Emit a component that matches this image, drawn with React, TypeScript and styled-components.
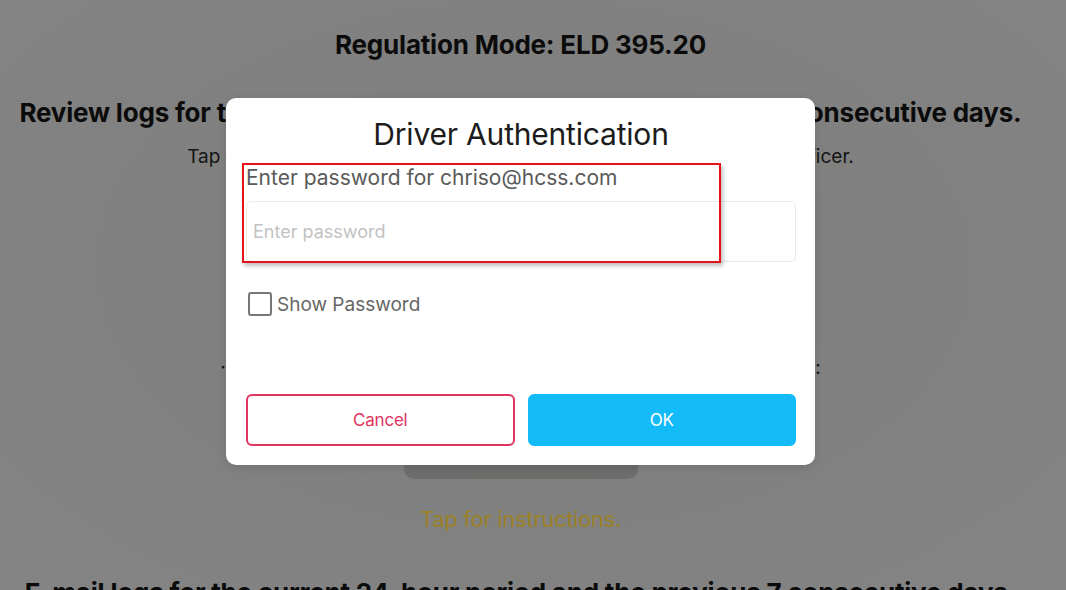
import React, { useState } from 'react';
import styled, { createGlobalStyle } from 'styled-components';

const GlobalStyle = createGlobalStyle`
	html, body {
		margin: 0;
		padding: 0;
		width: 100%;
		height: 100%;
		overflow: hidden;
		background: #808080;
		font-family: Inter, 'Noto Sans', sans-serif;
	}
`;

const Page = styled.div`
	position: relative;
	width: 1041px;
	height: 590px;
	display: flex;
	flex-direction: column;
	align-items: center;
	background: radial-gradient(ellipse at 50% 45%, #7c7d7a 0%, #818181 60%, #848484 100%);
	padding-right: 25px;
	overflow: hidden;
`;

const Heading = styled.div<{ top: number }>`
	margin-top: ${(props) => props.top}px;
	font-size: 26px;
	line-height: 30px;
	font-weight: 700;
	color: #0b0b0b;
	white-space: nowrap;
	letter-spacing: -0.2px;
`;

const Hint = styled.div<{ top: number }>`
	margin-top: ${(props) => props.top}px;
	font-size: 19px;
	line-height: 24px;
	color: #141414;
	white-space: nowrap;
`;

const DimButton = styled.div`
	margin-top: 49px;
	width: 234px;
	height: 50px;
	flex-shrink: 0;
	border-radius: 10px;
	background: #6d6e6b;
`;

const InstructionLink = styled.div`
	margin-top: 27px;
	font-size: 22px;
	line-height: 26px;
	color: #9a8026;
	letter-spacing: -0.3px;
`;

const Overlay = styled.div`
	position: absolute;
	inset: 0;
	display: flex;
	justify-content: center;
	align-items: flex-start;
	padding: 98px 25px 0 0;
`;

const Modal = styled.div`
	position: relative;
	width: 589px;
	box-sizing: border-box;
	padding: 17px 19px 19px 20px;
	background: #fff;
	border-radius: 10px;
	box-shadow: 0 2px 8px rgba(0, 0, 0, 0.12);
	display: flex;
	flex-direction: column;
`;

const Title = styled.div`
	text-align: center;
	font-size: 30px;
	line-height: 38px;
	color: #1c1c1c;
	letter-spacing: -0.2px;
`;

const Label = styled.div`
	margin-top: 13px;
	font-size: 21px;
	line-height: 24px;
	color: #5a5a5a;
`;

const Input = styled.input`
	margin-top: 11px;
	height: 61px;
	flex-shrink: 0;
	box-sizing: border-box;
	border: 1px solid #e9e9e9;
	border-radius: 5px;
	padding: 0 6px;
	font-family: inherit;
	font-size: 18px;
	color: #333;
	outline: none;
	&::placeholder {
		color: #c2c2c2;
	}
`;

const CheckRow = styled.label`
	margin-top: 30px;
	height: 24px;
	display: flex;
	align-items: center;
	gap: 5px;
	padding-left: 2px;
	font-size: 19px;
	color: #666;
	cursor: pointer;
`;

const Box = styled.span`
	width: 20px;
	height: 20px;
	border: 2px solid #777;
	border-radius: 3px;
	display: inline-flex;
	align-items: center;
	justify-content: center;
`;

const Actions = styled.div`
	margin-top: 78px;
	display: grid;
	grid-template-columns: 1fr 1fr;
	gap: 13px;
`;

const ActionButton = styled.button<{ primary?: boolean }>`
	height: 52px;
	border-radius: 6px;
	font-family: inherit;
	font-size: 17px;
	letter-spacing: -0.2px;
	cursor: pointer;
	border: 2px solid ${(props) => (props.primary ? '#13bbf8' : '#e0335d')};
	background: ${(props) => (props.primary ? '#13bbf8' : '#fff')};
	color: ${(props) => (props.primary ? '#fff' : '#e0335d')};
`;

const Highlight = styled.div`
	position: absolute;
	left: 16px;
	top: 65px;
	width: 479px;
	height: 100px;
	box-sizing: border-box;
	border: 2px solid #e5121a;
	box-shadow: 2px 3px 4px rgba(0, 0, 0, 0.25);
	pointer-events: none;
`;

function App() {
	const [show, setShow] = useState(false);

	return (
		<>
			<GlobalStyle />
			<Page>
				<Heading top={30}>Regulation Mode: ELD 395.20</Heading>
				<Heading top={38}>Review logs for the current 24-hour period and the previous 7 consecutive days.</Heading>
				<Hint top={17}>Tap the Begin Inspection button below, then hand the device to the officer.</Hint>
				<Hint top={187}>· To send the logs to the officer, tap Email Logs and enter the code:</Hint>
				<DimButton />
				<InstructionLink>Tap for instructions.</InstructionLink>
				<Heading top={46}>E-mail logs for the current 24-hour period and the previous 7 consecutive days.</Heading>
				<Overlay>
					<Modal>
						<Title>Driver Authentication</Title>
						<Label>Enter password for chriso@hcss.com</Label>
						<Input type={show ? 'text' : 'password'} placeholder="Enter password" />
						<CheckRow onClick={() => setShow(!show)}>
							<Box>
								{show ? (
									<svg width="14" height="14" viewBox="0 0 14 14">
										<path d="M2 7l3.5 3.5L12 3" stroke="#777" strokeWidth="2" fill="none" />
									</svg>
								) : null}
							</Box>
							Show Password
						</CheckRow>
						<Actions>
							<ActionButton>Cancel</ActionButton>
							<ActionButton primary>OK</ActionButton>
						</Actions>
						<Highlight />
					</Modal>
				</Overlay>
			</Page>
		</>
	);
}

export default App;
